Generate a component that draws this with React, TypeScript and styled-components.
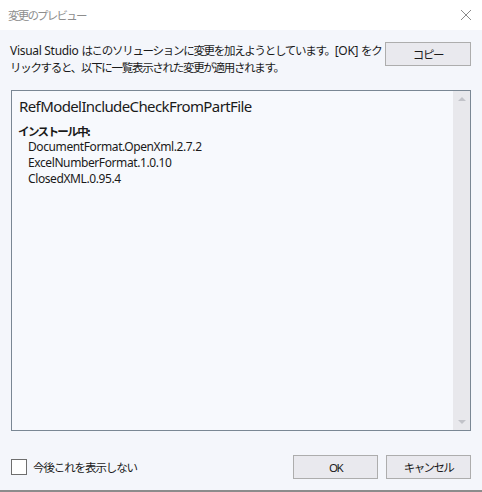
import React from "react";
import styled, { createGlobalStyle } from "styled-components";

const Global = createGlobalStyle`
  html, body { margin: 0; padding: 0; background: #f4f6fb; }
  * { box-sizing: border-box; }
`;

const Window = styled.div`
  width: 482px;
  height: 492px;
  display: flex;
  flex-direction: column;
  background: #f4f6fb;
  font-family: "Noto Sans", "Noto Sans CJK JP", sans-serif;
  font-size: 12px;
  color: #1a1a1a;
  overflow: hidden;
  border-bottom: 2px solid #8c8c8c;
`;

const TitleBar = styled.div`
  height: 30px;
  flex: none;
  background: #ffffff;
  display: flex;
  align-items: center;
  justify-content: space-between;
  padding: 0 8px;
`;

const Title = styled.span`
  color: #8d8d8d;
  font-family: "Noto Sans CJK JP", sans-serif;
  font-size: 11.5px;
  letter-spacing: -1.8px;
`;

const Body = styled.div`
  flex: 1;
  display: flex;
  flex-direction: column;
  padding: 12px 11px 0 10px;
`;

const MessageRow = styled.div`
  display: flex;
  justify-content: space-between;
  align-items: flex-start;
`;

const Message = styled.div`
  line-height: 17px;
  font-family: "Noto Sans CJK JP", sans-serif;
  font-size: 11.5px;
  letter-spacing: -1.3px;
  white-space: nowrap;
`;

const Latin = styled.span`
  font-family: "Noto Sans", sans-serif;
  font-size: 12px;
  letter-spacing: -0.3px;
`;

const Button = styled.button<{ w?: number }>`
  flex: none;
  width: ${(p) => p.w ?? 85}px;
  height: 24px;
  background: #e9e9ee;
  border: 1px solid #adadad;
  font-family: "Noto Sans", "Noto Sans CJK JP", sans-serif;
  font-size: 11.5px;
  letter-spacing: ${(p) => (p.w ? "-1.4px" : "-1.6px")};
  color: #1a1a1a;
  padding: 0;
  display: flex;
  align-items: center;
  justify-content: center;
`;

const Panel = styled.div`
  margin-top: 14px;
  margin-left: 1px;
  height: 341px;
  border: 1px solid #7a8794;
  background: #f7f9fd;
  display: flex;
`;

const PanelContent = styled.div`
  flex: 1;
  padding: 5px 7px;
`;

const ProjectName = styled.div`
  font-size: 15px;
  line-height: 20px;
  letter-spacing: -0.6px;
  margin-bottom: 7px;
  font-family: "Noto Sans", sans-serif;
`;

const SectionHead = styled.div`
  font-weight: bold;
  font-family: "Noto Sans CJK JP", sans-serif;
  font-size: 11.5px;
  letter-spacing: -1.6px;
  line-height: 16px;
  margin-left: -1px;
`;

const Item = styled.div`
  padding-left: 9px;
  line-height: 16px;
  font-size: 12px;
  letter-spacing: -0.4px;
`;

const ScrollBar = styled.div`
  width: 17px;
  background: #e8e8ec;
  display: flex;
  flex-direction: column;
  justify-content: space-between;
  align-items: center;
  padding: 6px 0;
`;

const Arrow = styled.div<{ down?: boolean }>`
  width: 0;
  height: 0;
  border-left: 4px solid transparent;
  border-right: 4px solid transparent;
  ${(p) => (p.down ? "border-top: 4px solid #c2c3c9;" : "border-bottom: 4px solid #c2c3c9;")}
`;

const Footer = styled.div`
  margin-top: 24px;
  margin-left: 1px;
  display: flex;
  align-items: center;
  justify-content: space-between;
`;

const CheckLabel = styled.label`
  display: flex;
  align-items: center;
  gap: 6px;
  font-family: "Noto Sans CJK JP", sans-serif;
  font-size: 11.5px;
  letter-spacing: -1.1px;
`;

const CheckBox = styled.span`
  width: 16px;
  height: 16px;
  border: 1px solid #6e6e6e;
  background: #ffffff;
  display: inline-block;
`;

const ButtonGroup = styled.div`
  display: flex;
  gap: 8px;
`;

export default function App() {
  return (
    <>
      <Global />
      <Window>
        <TitleBar>
          <Title>変更のプレビュー</Title>
          <svg width="12" height="12" viewBox="0 0 12 12" style={{ marginRight: 2 }}>
            <path d="M1 1 L11 11 M11 1 L1 11" stroke="#8a8a8a" strokeWidth="1" fill="none" />
          </svg>
        </TitleBar>
        <Body>
          <MessageRow>
            <Message>
              <Latin>Visual Studio </Latin>はこのソリューションに変更を加えようとしています。<Latin>[OK] </Latin>をク
              <br />
              リックすると、以下に一覧表示された変更が適用されます。
            </Message>
            <Button w={86}>コピー</Button>
          </MessageRow>
          <Panel>
            <PanelContent>
              <ProjectName>RefModelIncludeCheckFromPartFile</ProjectName>
              <SectionHead>インストール中:</SectionHead>
              <Item>DocumentFormat.OpenXml.2.7.2</Item>
              <Item>ExcelNumberFormat.1.0.10</Item>
              <Item>ClosedXML.0.95.4</Item>
            </PanelContent>
            <ScrollBar>
              <Arrow />
              <Arrow down />
            </ScrollBar>
          </Panel>
          <Footer>
            <CheckLabel>
              <CheckBox />
              今後これを表示しない
            </CheckLabel>
            <ButtonGroup>
              <Button>OK</Button>
              <Button>キャンセル</Button>
            </ButtonGroup>
          </Footer>
        </Body>
      </Window>
    </>
  );
}
